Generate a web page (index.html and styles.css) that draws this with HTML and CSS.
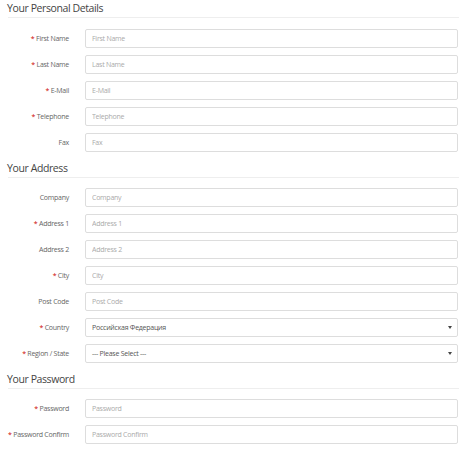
FILE: index.html
```html
<!DOCTYPE html>
<html>
<head>
<meta charset="utf-8">
<link rel="stylesheet" href="styles.css">
</head>
<body>
<form class="form">
  <section class="group">
    <h2 class="legend">Your Personal Details</h2>
    <div class="rows">
      <div class="row"><label class="label"><span class="req">*</span> First Name</label><input class="field" placeholder="First Name"></div>
      <div class="row"><label class="label"><span class="req">*</span> Last Name</label><input class="field" placeholder="Last Name"></div>
      <div class="row"><label class="label"><span class="req">*</span> E-Mail</label><input class="field" placeholder="E-Mail"></div>
      <div class="row"><label class="label"><span class="req">*</span> Telephone</label><input class="field" placeholder="Telephone"></div>
      <div class="row"><label class="label">Fax</label><input class="field" placeholder="Fax"></div>
    </div>
  </section>
  <section class="group">
    <h2 class="legend">Your Address</h2>
    <div class="rows">
      <div class="row"><label class="label">Company</label><input class="field" placeholder="Company"></div>
      <div class="row"><label class="label"><span class="req">*</span> Address 1</label><input class="field" placeholder="Address 1"></div>
      <div class="row"><label class="label">Address 2</label><input class="field" placeholder="Address 2"></div>
      <div class="row"><label class="label"><span class="req">*</span> City</label><input class="field" placeholder="City"></div>
      <div class="row"><label class="label">Post Code</label><input class="field" placeholder="Post Code"></div>
      <div class="row"><label class="label"><span class="req">*</span> Country</label><div class="field select"><span>Российская Федерация</span><span class="arrow"></span></div></div>
      <div class="row"><label class="label"><span class="req">*</span> Region / State</label><div class="field select"><span>--- Please Select ---</span><span class="arrow"></span></div></div>
    </div>
  </section>
  <section class="group">
    <h2 class="legend">Your Password</h2>
    <div class="rows">
      <div class="row"><label class="label"><span class="req">*</span> Password</label><input class="field" placeholder="Password"></div>
      <div class="row"><label class="label"><span class="req">*</span> Password Confirm</label><input class="field" placeholder="Password Confirm"></div>
    </div>
  </section>
</form>
</body>
</html>
```

FILE: styles.css
```css
html, body {
  margin: 0;
  padding: 0;
  background: #fff;
}
body {
  font-family: "Open Sans", "DejaVu Sans", sans-serif;
  color: #666;
}
.form {
  width: 451px;
  padding-left: 8px;
}
.group {
  margin: 0 0 8px 0;
}
.legend {
  height: 17px;
  margin: 0 0 11px 0;
  padding: 0;
  font-size: 10.5px;
  font-weight: normal;
  line-height: 17px;
  letter-spacing: -0.4px;
  color: #444;
  border-bottom: 1px solid #eee;
  text-indent: -1px;
}
.group + .group .legend {
  margin-bottom: 10px;
}
.rows {
  display: flex;
  flex-direction: column;
  gap: 7px;
}
.row {
  display: grid;
  grid-template-columns: 77px 1fr;
  align-items: center;
  height: 19px;
}
.label {
  text-align: right;
  padding-right: 16px;
  font-size: 7px;
  letter-spacing: -0.25px;
  color: #666;
  white-space: nowrap;
}
.req {
  color: #c00;
}
.field {
  box-sizing: border-box;
  height: 19px;
  width: 373px;
  border: 1px solid #ddd;
  border-radius: 2px;
  background: #fff;
  font-family: "Open Sans", "DejaVu Sans", sans-serif;
  font-size: 7px;
  letter-spacing: -0.25px;
  padding: 0 6px;
  margin: 0;
  outline: none;
  color: #555;
}
.field::placeholder {
  color: #aaa;
}
.select {
  display: flex;
  align-items: center;
  justify-content: space-between;
  color: #555;
}
.arrow {
  width: 0;
  height: 0;
  border-left: 2px solid transparent;
  border-right: 2px solid transparent;
  border-top: 3px solid #444;
  margin-right: -1px;
}
```
